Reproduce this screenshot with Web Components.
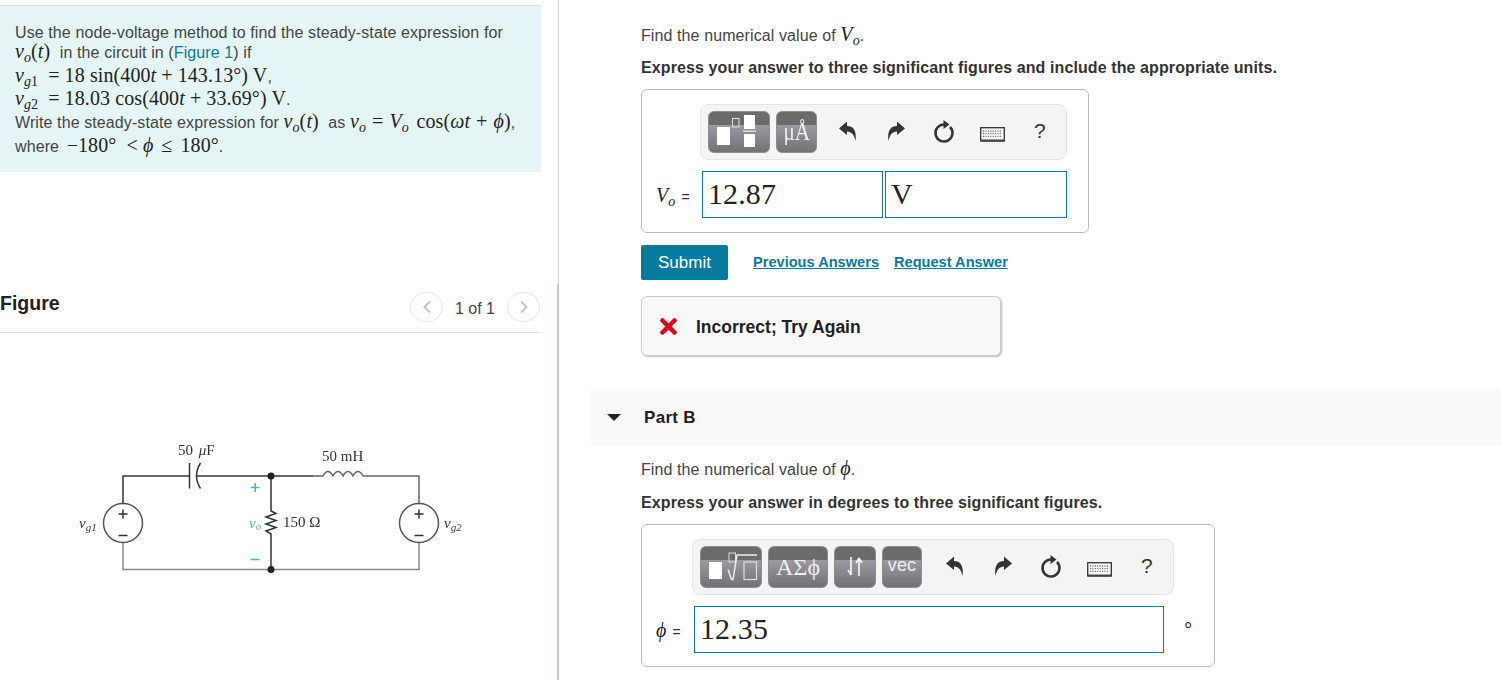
<!DOCTYPE html>
<html lang="en">
<head>
<meta charset="utf-8">
<title>Part A</title>
<style>
  html, body { margin: 0; height: 680px; overflow: hidden; background: #fff; }
  body { font-family: "Liberation Sans", Arial, sans-serif; font-size: 16px; color: #333; }
</style>
</head>
<body>
<mastering-page></mastering-page>

<script>
// variable de una formula: base en cursiva y subindice opcional
class MathV extends HTMLElement {
  constructor() {
    super();
    this.attachShadow({ mode: 'open' });
  }

  connectedCallback() {
    const sub = this.getAttribute('sub');
    const num = this.getAttribute('num');
    // sin espacios alrededor del style: el host es inline y se verian
    this.shadowRoot.innerHTML = `<style>
      :host { display: inline; font-family: "Liberation Serif", "Times New Roman", serif; font-size: 20px; color: #222; white-space: nowrap; }
      i { font-style: italic; }
      sub { font-size: 14px; line-height: 0; vertical-align: -4px; }
      sub b { font-weight: normal; font-style: normal; }
    </style><i>${this.getAttribute('base')}</i>${sub ? `<sub><i>${sub}</i>${num ? `<b>${num}</b>` : ''}</sub>` : ''}`;
  }
}

// texto de formula, con tipografia serif
class MathText extends HTMLElement {
  constructor() {
    super();
    this.attachShadow({ mode: 'open' });
  }

  connectedCallback() {
    this.shadowRoot.innerHTML = `<style>
      :host { display: inline; font-family: "Liberation Serif", "Times New Roman", serif; font-size: 20px; color: #222; white-space: nowrap; }
    </style><slot></slot>`;
  }
}

class IntroBox extends HTMLElement {
  constructor() {
    super();
    this.attachShadow({ mode: 'open' });
  }

  connectedCallback() {
    this.shadowRoot.innerHTML = `
    <style>
      :host { display: block; width: 541px; height: 167px; box-sizing: border-box; margin-top: 5px; padding: 16px 0 0 15px;
        background: #e5f5f6; border-top: 1px solid #dbe3e8; font-size: 16px; letter-spacing: .1px; color: #444; }
      div { height: 23px; line-height: 23px; white-space: nowrap; }
      div.first { height: 18px; line-height: 21px; }
      div.second { height: 24px; }
      div.last { margin-top: 1px; }
      a { color: #0a7a9b; text-decoration: none; }
      .o { margin: 0 5px; }
      .eq { margin: 0 5px 0 10px; }
      .w { margin: 0 6px; }
      .le { margin: 0 8px; }
      .s3 { margin-left: 3px; }
      .s5 { margin-left: 5px; }
    </style>
    <div class="first">Use the node-voltage method to find the steady-state expression for</div>
    <div class="second"><math-v base="v" sub="o"></math-v><math-text>(<math-v base="t"></math-v>)</math-text><span class="s5"> in the circuit in (<a>Figure 1</a>) if</span></div>
    <div><math-v base="v" sub="g" num="1"></math-v><math-text><span class="eq">=</span>18 sin(400<math-v base="t"></math-v><span class="o">+</span>143.13°) V</math-text>,</div>
    <div><math-v base="v" sub="g" num="2"></math-v><math-text><span class="eq">=</span>18.03 cos(400<math-v base="t"></math-v><span class="o">+</span>33.69°) V</math-text>.</div>
    <div>Write the steady-state expression for <math-v base="v" sub="o"></math-v><math-text>(<math-v base="t"></math-v>)</math-text><span class="s5"> as </span><math-v base="v" sub="o"></math-v><math-text><span class="w">=</span></math-text><math-v base="V" sub="o"></math-v><span class="s3"> </span><math-text>cos(<math-v base="ωt"></math-v><span class="w">+</span><math-v base="ϕ"></math-v>)</math-text>,</div>
    <div class="last">where <span class="s3"></span><math-text>−180° <span class="o">&lt;</span><math-v base="ϕ"></math-v><span class="le">≤</span>180°</math-text>.</div>
    `;
  }
}

class FigurePager extends HTMLElement {
  constructor() {
    super();
    this.attachShadow({ mode: 'open' });
  }

  connectedCallback() {
    this.shadowRoot.innerHTML = `
    <style>
      :host { display: flex; align-items: center; width: 540px; height: 48px; border-bottom: 1px solid #e2e2e2; font-size: 16px; color: #444; }
      h3 { margin: 0 auto 10px 0; font-size: 19.500px; line-height: 24px; color: #222; }
      .nav { display: flex; align-items: center; margin-bottom: 3px; }
      .dot { width: 31px; height: 28px; border: 1px solid #e6e6e6; border-radius: 50%; display: flex; align-items: center; justify-content: center; }
      span { width: 64px; text-align: center; margin-top: 5px; }
    </style>
    <h3>Figure</h3>
    <div class="nav">
      <div class="dot"><svg width="10" height="14" viewBox="0 0 10 14"><path d="M8 1.500 2.500 7 8 12.500" fill="none" stroke="#bcc6d2" stroke-width="2"/></svg></div>
      <span>1 of 1</span>
      <div class="dot"><svg width="10" height="14" viewBox="0 0 10 14"><path d="M2 1.500 7.500 7 2 12.500" fill="none" stroke="#bcc6d2" stroke-width="2"/></svg></div>
    </div>
    `;
  }
}

class CircuitDiagram extends HTMLElement {
  constructor() {
    super();
    this.attachShadow({ mode: 'open' });
  }

  connectedCallback() {
    this.shadowRoot.innerHTML = `
    <style>
      :host { display: block; margin: 97px 0 0 50px; width: 450px; height: 160px; }
      svg { display: block; filter: blur(.4px); }
      text { font-family: "Liberation Serif", "Times New Roman", serif; font-size: 15px; fill: #333; }
      .blue { fill: #55afcf; }
      .sm { font-size: 11px; }
    </style>
    <svg width="450" height="160" viewBox="0 0 450 160">
      <g fill="none" stroke-width="1.500">
        <path d="M73 73.500V46H139.500M146 46H263" stroke="#333"/>
        <path d="M139.500 33V58.500M150.500 33Q142.500 46 150.500 58.500" stroke="#333"/>
        <path d="M263 46H273Q278 37 283 46Q288 37 293 46Q298 37 303 46Q308 37 313 46H369V73.500" stroke="#666"/>
        <path d="M73 112.500V139.500H369V112.500" stroke="#888"/>
        <path d="M221 46V81L226 83.500 216 87 226 90.500 216 94 226 97.500 216 101 221 104V139.500" stroke="#333"/>
        <circle cx="73" cy="93" r="19.500" stroke="#555"/>
        <circle cx="369" cy="93" r="19.500" stroke="#555"/>
        <path d="M68.500 84H77.500M73 79.500V88.500M68.500 105.500H77.500M364.500 84H373.500M369 79.500V88.500M364.500 105.500H373.500" stroke="#333"/>
        <path d="M201 57.500H209.500M205.200 53V62M200.500 129.500H209.500" stroke="#55afcf"/>
      </g>
      <circle cx="221" cy="46" r="3.500" fill="#222"/>
      <circle cx="221" cy="139.500" r="3.500" fill="#222"/>
      <text x="128" y="25" word-spacing="2">50 <tspan font-style="italic">μ</tspan>F</text>
      <text x="272" y="31">50 mH</text>
      <text x="233" y="97">150 Ω</text>
      <text x="29" y="98" font-style="italic" font-size="16">v<tspan class="sm" dy="3">g1</tspan></text>
      <text x="394" y="98" font-style="italic" font-size="16">v<tspan class="sm" dy="3">g2</tspan></text>
      <text x="199" y="98" font-style="italic" class="blue">v<tspan class="sm blue" dy="2">o</tspan></text>
    </svg>
    `;
  }
}

// panel izquierdo: enunciado arriba y figura abajo, cada uno con su linea divisoria
class LeftPane extends HTMLElement {
  constructor() {
    super();
    this.attachShadow({ mode: 'open' });
  }

  connectedCallback() {
    this.shadowRoot.innerHTML = `
    <style>
      :host { display: flex; flex-direction: column; width: 559px; height: 680px; }
      .top { height: 284px; border-right: 1px solid #c9d0d6; box-sizing: border-box; overflow: hidden; }
      .fig { flex: 1; border-right: 2px solid #b9cde0; box-sizing: border-box; }
    </style>
    <div class="top"><intro-box></intro-box></div>
    <div class="fig">
      <figure-pager></figure-pager>
      <circuit-diagram></circuit-diagram>
    </div>
    `;
  }
}

class ToolBtn extends HTMLElement {
  constructor() {
    super();
    this.attachShadow({ mode: 'open' });
  }

  connectedCallback() {
    const w = this.getAttribute('w') || 42;
    this.shadowRoot.innerHTML = `
    <style>
      :host { display: flex; align-items: center; justify-content: center; width: ${w}px; height: 42px; box-sizing: border-box;
        border-radius: 6px; border: 1px solid #8e8d90;
        background: linear-gradient(#6b6b6b 0 13px, #9c9aa2 13px, #727175 100%);
        font-family: "Liberation Serif", "Times New Roman", serif; color: #eee; font-size: 24px; }
      ::slotted(svg) { display: block; }
    </style>
    <slot></slot>`;
  }
}

// barra de herramientas: botones por slot, y las acciones fijas a la derecha
class MathToolbar extends HTMLElement {
  constructor() {
    super();
    this.attachShadow({ mode: 'open' });
  }

  connectedCallback() {
    const undo = 'M0 7.500 8 .5V5C14 5 18 9 16.500 20 15 14 13 10.500 8 10.500V14Z';
    const rows = [4, 6.7, 9.4].map(y => `<path d="M3 ${y}H22" stroke="#777" stroke-width="1.300" stroke-dasharray="1.200 1.200"/>`).join('');
    this.shadowRoot.innerHTML = `
    <style>
      :host { display: flex; align-items: center; box-sizing: border-box; height: 56px; padding: 0 2px 0 ${this.getAttribute('pad') || 7}px;
        width: ${this.getAttribute('w')}px; margin-left: ${this.getAttribute('left')}px;
        background: #f4f4f4; border: 1px solid #e4e4e4; border-radius: 8px; }
      .btns { display: flex; gap: ${this.getAttribute('gap') || 6}px; margin-right: auto; }
      .a { width: 48px; display: flex; justify-content: center; align-items: center; height: 26px;
        font-family: "Liberation Sans", Arial, sans-serif; font-size: 21px; color: #333; }
      .up { margin-top: -2px; }
      .help { margin-top: -3px; }
      .kb { margin-top: 4px; }
    </style>
    <div class="btns"><slot></slot></div>
    <div class="a up"><svg width="18" height="21" viewBox="0 0 18 21"><path d="${undo}" fill="#333"/></svg></div>
    <div class="a up"><svg width="18" height="21" viewBox="0 0 18 21"><path d="${undo}" fill="#333" transform="matrix(-1 0 0 1 18 0)"/></svg></div>
    <div class="a"><svg width="22" height="24" viewBox="0 0 22 24"><path d="M11 4.500A8.500 8.500 0 1 0 17 7" fill="none" stroke="#333" stroke-width="2.500"/><path d="M10.500 0 16.500 4.500 10.500 9Z" fill="#333"/></svg></div>
    <div class="a kb"><svg width="25" height="15" viewBox="0 0 25 15"><rect x=".7" y=".7" width="23.600" height="13.300" fill="#f8f8f8" stroke="#333" stroke-width="1.300"/><rect x="1" y="12.500" width="23" height="2" fill="#444"/>${rows}</svg></div>
    <div class="a help">?</div>
    `;
  }
}

class AnswerBox extends HTMLElement {
  constructor() {
    super();
    this.attachShadow({ mode: 'open' });
  }

  connectedCallback() {
    this.shadowRoot.innerHTML = `
    <style>
      :host { display: block; box-sizing: border-box; width: ${this.getAttribute('w')}px; border: 1px solid #bbb; border-radius: 6px;
        padding: 14px 0 ${this.getAttribute('pb') || 14}px; }
      .row { display: flex; align-items: center; margin-top: 11px; padding-left: 14px; }
    </style>
    <slot name="toolbar"></slot>
    <div class="row"><slot></slot></div>`;
  }
}

class AnswerField extends HTMLElement {
  constructor() {
    super();
    this.attachShadow({ mode: 'open' });
  }

  connectedCallback() {
    this.shadowRoot.innerHTML = `
    <style>
      :host { display: block; box-sizing: border-box; width: ${this.getAttribute('w')}px; height: 47px; border: 1px solid #0a7a9b;
        padding-left: 5px; font-family: "Liberation Serif", "Times New Roman", serif; font-size: 30px; line-height: 43px; color: #222; }
    </style>
    <slot></slot>`;
  }
}

class FieldLabel extends HTMLElement {
  constructor() {
    super();
    this.attachShadow({ mode: 'open' });
  }

  connectedCallback() {
    this.shadowRoot.innerHTML = `
    <style>
      :host { display: block; width: ${this.getAttribute('w')}px; height: 24px; line-height: 24px; flex: none; font-size: 14px; color: #333; white-space: nowrap; word-spacing: 2px; }
    </style>
    <slot></slot>`;
  }
}

class PartA extends HTMLElement {
  constructor() {
    super();
    this.attachShadow({ mode: 'open' });
  }

  connectedCallback() {
    this.shadowRoot.innerHTML = `
    <style>
      :host { display: block; padding: 23px 0 0 50px; font-size: 16px; letter-spacing: .1px; color: #444; }
      p { margin: 0 0 12px; height: 22px; line-height: 22px; }
      p.b { font-weight: bold; color: #333; margin-bottom: 10px; white-space: nowrap; }
      .gap { width: 2px; flex: none; }
      .mu { display: inline-block; font-size: 25px; transform: scaleX(.85); margin-top: -1px; }
      .actions { display: flex; align-items: center; margin-top: 12px; }
      .submit { width: 87px; height: 35px; box-sizing: border-box; border-radius: 2px; background: #047b9e; color: #fff; font-size: 17px; letter-spacing: 0;
        display: flex; align-items: center; justify-content: center; margin-right: 25px; }
      a { color: #0a7a9b; font-weight: bold; font-size: 14.600px; letter-spacing: 0; text-decoration: underline; margin: 0 15px 2px 0; }
      .fb { display: flex; align-items: center; box-sizing: border-box; width: 360px; height: 60px; margin-top: 16px; padding: 3px 0 0 18px;
        border: 1px solid #ccc; border-radius: 6px; background: #f9f9f9; box-shadow: 1px 1px 2px #bbb;
        font-weight: bold; font-size: 17.500px; letter-spacing: 0; color: #222; }
      .fb svg { margin: -2px 19px 0 0; }
    </style>
    <p>Find the numerical value of <math-v base="V" sub="o"></math-v>.</p>
    <p class="b">Express your answer to three significant figures and include the appropriate units.</p>
    <answer-box w="448">
      <math-toolbar slot="toolbar" w="367" left="58">
        <tool-btn w="62">
          <svg width="60" height="40" viewBox="0 0 60 40" fill="#fff">
            <rect x="8" y="15" width="13" height="18"/>
            <rect x="23.500" y="6.500" width="6.500" height="8.500" fill="none" stroke="#ddd"/>
            <rect x="35" y="3" width="11" height="14"/>
            <rect x="34" y="18.500" width="13" height="1.500" fill="#ddd"/>
            <rect x="35" y="22" width="11" height="13"/>
          </svg>
        </tool-btn>
        <tool-btn w="41"><span class="mu">μÅ</span></tool-btn>
      </math-toolbar>
      <field-label w="46"><math-v base="V" sub="o"></math-v> =</field-label>
      <answer-field w="181">12.87</answer-field>
      <div class="gap"></div>
      <answer-field w="182">V</answer-field>
    </answer-box>
    <div class="actions">
      <div class="submit">Submit</div>
      <a>Previous Answers</a>
      <a>Request Answer</a>
    </div>
    <div class="fb">
      <svg width="17" height="17" viewBox="0 0 17 17"><path d="M2.500 2.500 14.500 14.500M14.500 2.500 2.500 14.500" stroke="#e2001a" stroke-width="4.500" stroke-linecap="round"/></svg>
      Incorrect; Try Again
    </div>
    `;
  }
}

class PartB extends HTMLElement {
  constructor() {
    super();
    this.attachShadow({ mode: 'open' });
  }

  connectedCallback() {
    this.shadowRoot.innerHTML = `
    <style>
      :host { display: block; margin-top: 33px; font-size: 16px; letter-spacing: .1px; color: #444; }
      .band { display: flex; align-items: center; height: 57px; padding-left: 16px; background: #f9f9f9; font-weight: bold; font-size: 17px; letter-spacing: .3px; color: #222; }
      .band svg { margin-right: 23px; }
      .body { padding: 11px 0 0 50px; }
      p { margin: 0 0 13px; height: 22px; line-height: 22px; }
      p.b { font-weight: bold; color: #333; margin-bottom: 10px; white-space: nowrap; }
      .deg { margin-left: 20px; font-size: 21px; color: #333; }
    </style>
    <div class="band">
      <svg width="14" height="7" viewBox="0 0 14 7"><path d="M0 0H14L7 7Z" fill="#222"/></svg>
      Part B
    </div>
    <div class="body">
      <p>Find the numerical value of <math-v base="ϕ"></math-v>.</p>
      <p class="b">Express your answer in degrees to three significant figures.</p>
      <answer-box w="574" pb="13">
        <math-toolbar slot="toolbar" w="482" left="50" pad="7" gap="6">
          <tool-btn w="62">
            <svg width="60" height="40" viewBox="0 0 60 40" fill="#fff">
              <rect x="8" y="15" width="13" height="17"/>
              <rect x="28" y="6" width="6.500" height="9" fill="none" stroke="#ddd"/>
              <path d="M27 22.500 30.500 32.500H32L36 8H56" fill="none" stroke="#eee" stroke-width="1.500"/>
              <rect x="43" y="15" width="12.500" height="17.500" fill="none" stroke="#ddd" stroke-width="1.200"/>
            </svg>
          </tool-btn>
          <tool-btn w="60">ΑΣϕ</tool-btn>
          <tool-btn w="42">
            <svg width="24" height="24" viewBox="0 0 24 24" fill="none" stroke="#fff" stroke-width="1.500">
              <path d="M8 2V20M8 20 5 15M16 21V3M16 3 13 8M16 3 19 8"/>
            </svg>
          </tool-btn>
          <tool-btn w="40" style="font-family:'Liberation Sans',Arial,sans-serif;font-size:18px;align-items:flex-start;line-height:36px">vec</tool-btn>
        </math-toolbar>
        <field-label w="38"><math-v base="ϕ"></math-v> =</field-label>
        <answer-field w="470">12.35</answer-field>
        <div class="deg">°</div>
      </answer-box>
    </div>
    `;
  }
}

class RightPane extends HTMLElement {
  constructor() {
    super();
    this.attachShadow({ mode: 'open' });
  }

  connectedCallback() {
    this.shadowRoot.innerHTML = `
    <style>
      :host { display: block; flex: 1; padding-left: 32px; height: 680px; overflow: hidden; }
    </style>
    <part-a></part-a>
    <part-b></part-b>
    `;
  }
}

class MasteringPage extends HTMLElement {
  constructor() {
    super();
    this.attachShadow({ mode: 'open' });
  }

  connectedCallback() {
    this.shadowRoot.innerHTML = `
    <style>
      :host { display: flex; width: 1501px; height: 680px; }
    </style>
    <left-pane></left-pane>
    <right-pane></right-pane>
    `;
  }
}

customElements.define('math-v', MathV);
customElements.define('math-text', MathText);
customElements.define('intro-box', IntroBox);
customElements.define('figure-pager', FigurePager);
customElements.define('circuit-diagram', CircuitDiagram);
customElements.define('left-pane', LeftPane);
customElements.define('tool-btn', ToolBtn);
customElements.define('math-toolbar', MathToolbar);
customElements.define('answer-box', AnswerBox);
customElements.define('answer-field', AnswerField);
customElements.define('field-label', FieldLabel);
customElements.define('part-a', PartA);
customElements.define('part-b', PartB);
customElements.define('right-pane', RightPane);
customElements.define('mastering-page', MasteringPage);
</script>
</body>
</html>
